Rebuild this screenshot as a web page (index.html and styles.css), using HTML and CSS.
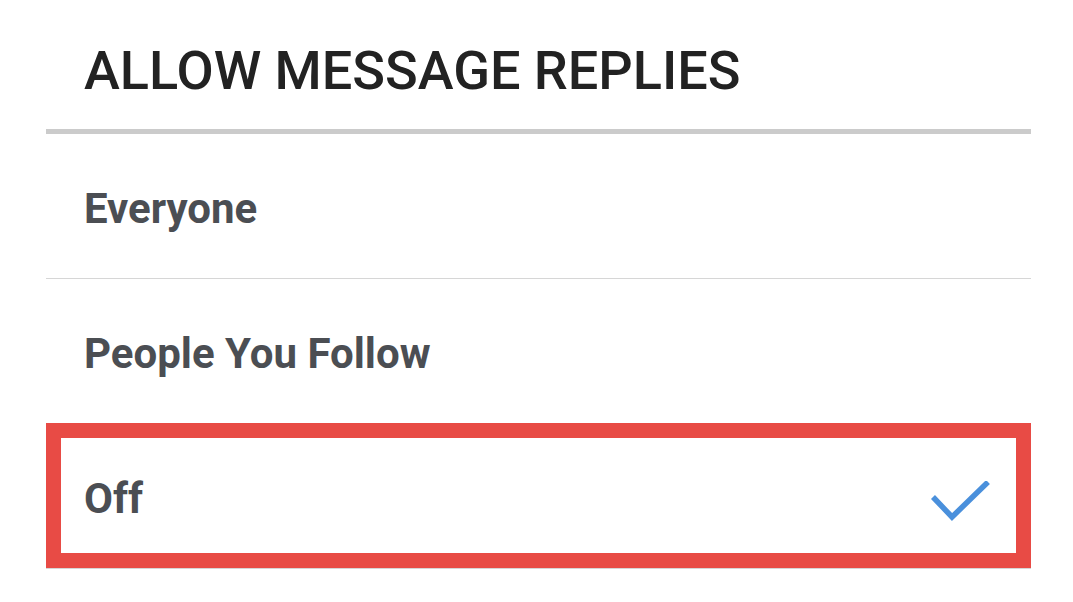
FILE: index.html
```html
<!DOCTYPE html>
<html lang="en">
<head>
<meta charset="UTF-8">
<meta name="viewport" content="width=device-width, initial-scale=1.0">
<title>Allow Message Replies</title>
<link rel="stylesheet" href="styles.css">
</head>

<body>

<div class="container">
    <div class="settings-list">
        <h2 class="list-title">ALLOW MESSAGE REPLIES</h2>

        <div class="option">
            <span class="option-label">Everyone</span>
        </div>
        <div class="option">
            <span class="option-label">People You Follow</span>
        </div>
        <div class="option selected">
            <span class="option-label">Off</span>
            <svg class="check" width="64" height="46" viewBox="0 0 64 46">
                <polyline points="3,16 22,36 58,1" fill="none" stroke="#4a90dc" stroke-width="5.5"/>
            </svg>
        </div>
    </div>
</div>

</body>
</html>
```

FILE: styles.css
```css
body {
    margin: 0;
    font-family: Roboto, "Liberation Sans", Arial, sans-serif;
    background-color: #fff;
}

.container {
    padding: 0 42px 0 46px;
}

.list-title {
    margin: 0;
    padding: 43px 0 31px 38px;
    font-size: 54px;
    line-height: 55px;
    font-weight: 500;
    color: #222;
    border-bottom: 5px solid #cbcbcb;
}

.option {
    position: relative;
    display: flex;
    align-items: center;
    justify-content: space-between;
    height: 145px;
    padding: 5px 37px 0 38px;
    box-sizing: border-box;
    border-bottom: 1px solid #d6d6d6;
}

.option-label {
    font-size: 42px;
    line-height: 48px;
    font-weight: 700;
    color: #4b4e53;
}

.check {
    display: block;
    margin-top: 10px;
}

.selected::after {
    content: "";
    position: absolute;
    top: -1px;
    left: 0;
    right: 0;
    bottom: 0;
    border: 15px solid #e84b45;
}
```
